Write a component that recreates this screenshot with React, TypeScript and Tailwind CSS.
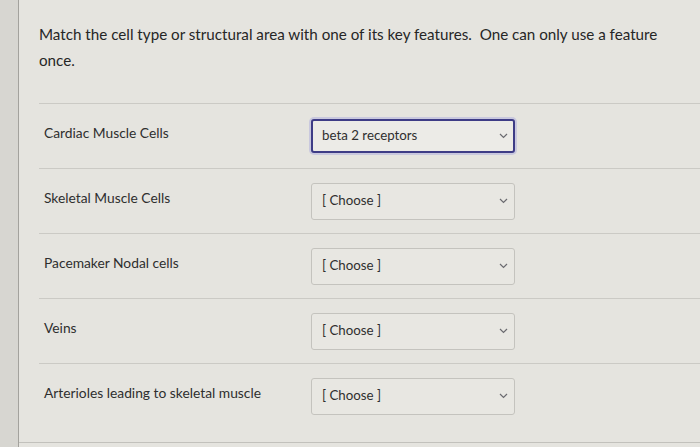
import React from 'react';

const rows = [
  { label: 'Cardiac Muscle Cells', value: 'beta 2 receptors', focused: true },
  { label: 'Skeletal Muscle Cells', value: '[ Choose ]' },
  { label: 'Pacemaker Nodal cells', value: '[ Choose ]' },
  { label: 'Veins', value: '[ Choose ]' },
  { label: 'Arterioles leading to skeletal muscle', value: '[ Choose ]' },
];

function Chevron() {
  return (
    <svg width="9" height="6" viewBox="0 0 9 6" className="shrink-0">
      <path d="M1 1 L4.5 4.5 L8 1" fill="none" stroke="#6b6b70" strokeWidth="1.2" />
    </svg>
  );
}

function FakeSelect({ value, focused }: { value: string; focused?: boolean }) {
  return (
    <div
      className={
        focused
          ? 'flex items-center justify-between w-[204px] h-[34px] pl-[9px] pr-[5px] rounded-[3px] border-2 border-[#3e3c86] bg-[#ecebe7] shadow-[0_0_0_2px_#c9c8de]'
          : 'flex items-center justify-between w-[204px] h-[37px] pl-[10px] pr-[6px] rounded-[3px] border border-[#c4c3be] bg-[#e8e7e2]'
      }
    >
      <span className="text-[13.3px] text-[#2f2f2f]">{value}</span>
      <Chevron />
    </div>
  );
}

export default function App() {
  return (
    <div
      className="flex w-[700px] h-[447px] bg-[#e5e4df] overflow-hidden"
      style={{ fontFamily: 'Lato, "Open Sans", sans-serif' }}
    >
      <div className="w-[19px] shrink-0 bg-[#d7d6d1] border-r border-[#a3a29d]" />
      <div className="flex-1 flex flex-col border-b border-[#c2c1bc] h-[443px]">
        <div className="pl-[20px] pr-[30px] pt-[21px]">
          <p className="text-[15.2px] leading-[26px] text-[#262626]">
            Match the cell type or structural area with one of its key features.&nbsp; One can only use a feature once.
          </p>
        </div>
        <div className="mt-[30px] ml-[20px]">
          {rows.map((row, i) => (
            <div
              key={i}
              className="flex items-center h-[65px] border-t border-[#cbcac5]"
            >
              <div className="w-[272px] pl-[5px] pb-[6px] text-[13.8px] text-[#2e2e2e]">{row.label}</div>
              <FakeSelect value={row.value} focused={row.focused} />
            </div>
          ))}
        </div>
      </div>
    </div>
  );
}
